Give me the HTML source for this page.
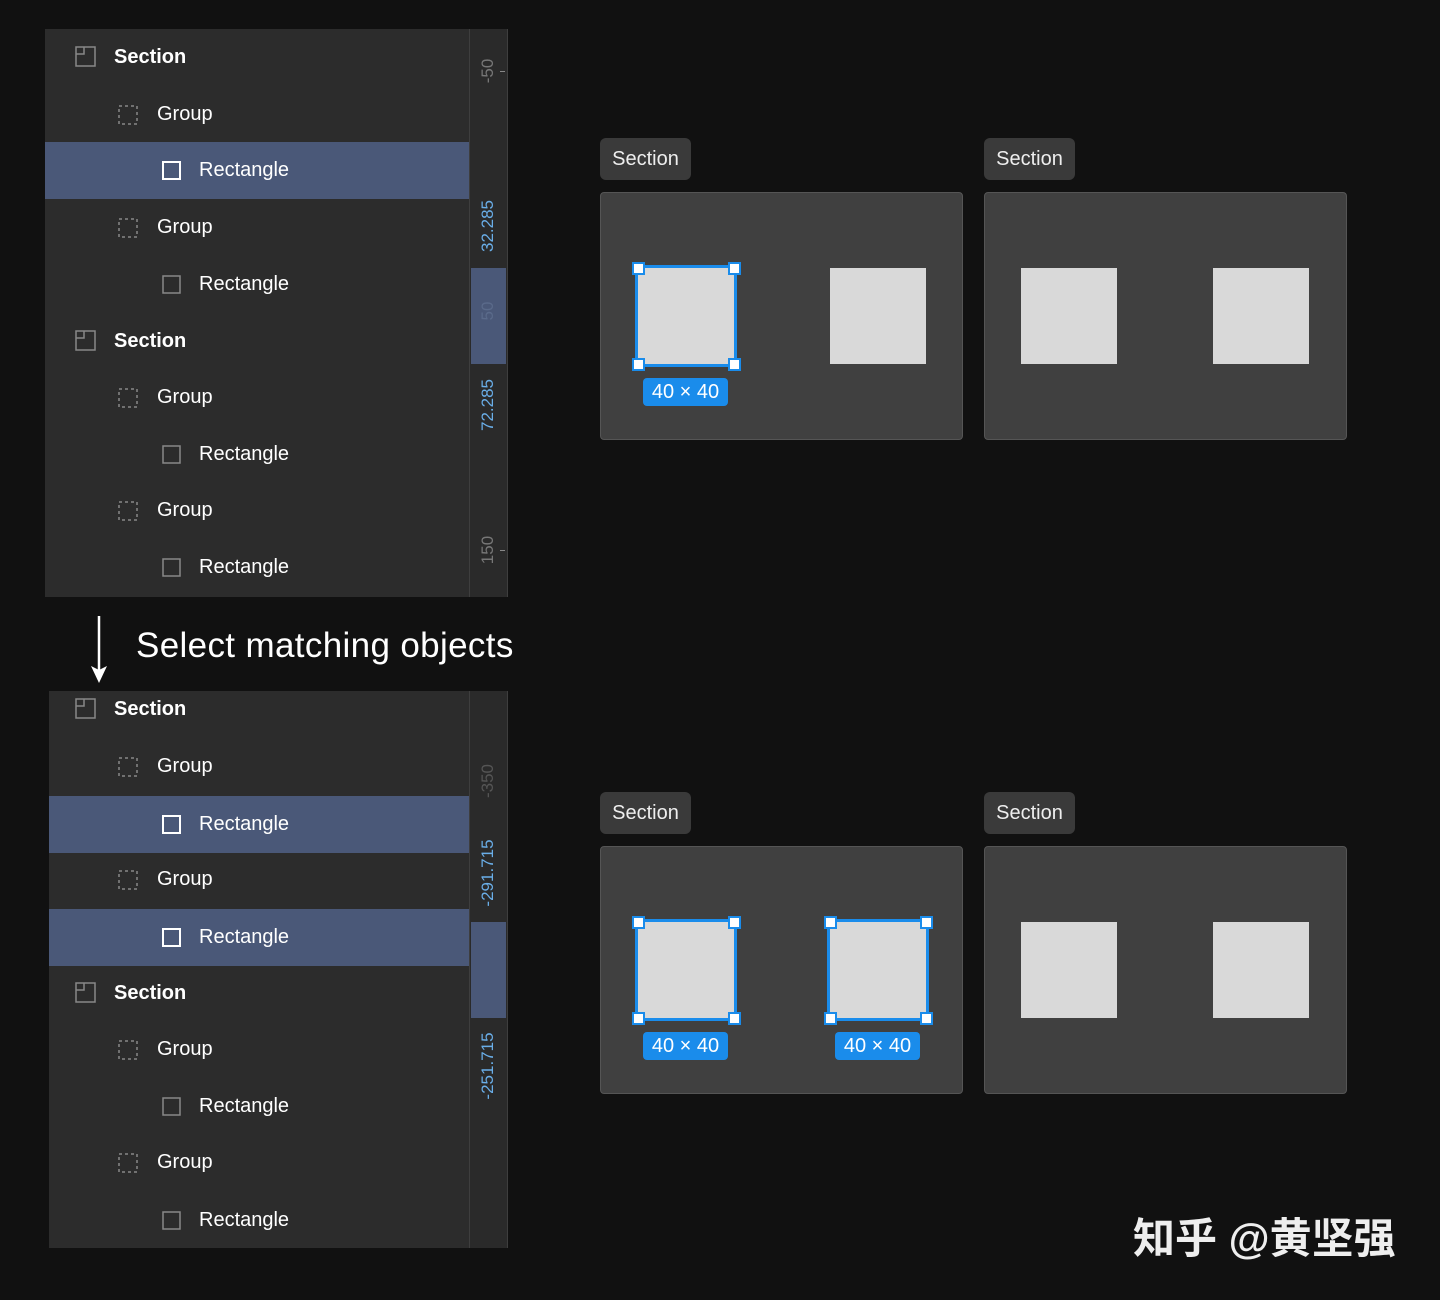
<!DOCTYPE html><html><head><meta charset="utf-8"><style>
body{margin:0;width:1440px;height:1300px;background:#111;position:relative;overflow:hidden;font-family:"Liberation Sans","Noto Sans CJK SC",sans-serif;color:#fff}
.a{position:absolute}
.panel{position:absolute;background:#2c2c2c;overflow:hidden}
.row{position:absolute;left:0;width:424px;height:57px;font-size:20px;line-height:57px}
.sel{background:#4a5878}
.ruler{position:absolute;top:0;bottom:0;left:424px;width:37px;background:#2a2a2a;border-left:1px solid #3e3e3e;border-right:1px solid #3e3e3e}
.rl{position:absolute;transform:rotate(-90deg);font-size:17px;white-space:nowrap;width:100px;text-align:center;left:-32px}
.lab{position:absolute;width:91px;height:42px;background:#3a3a3a;border-radius:6px;font-size:20px;line-height:42px;text-align:center;color:#eee}
.fr{position:absolute;width:361px;height:246px;background:#404040;border:1px solid #555;border-radius:4px}
.sq{position:absolute;width:96px;height:96px;background:#d9d9d9}
.s2{outline:3px solid #1a8ceb}
.h{position:absolute;width:13px;height:13px;background:#fff;border:2px solid #1a8ceb;box-sizing:border-box}
.bd{position:absolute;width:85px;height:28px;background:#1a8ceb;border-radius:4px;font-size:20px;line-height:28px;text-align:center}
</style></head><body>

<div class="panel" style="left:45px;top:29px;width:463px;height:568px">
<div class="row" style="top:0"><svg class="a" style="left:30px;top:17px" width="22" height="22"><rect x="1" y="1" width="19" height="19" fill="none" stroke="#888" stroke-width="1.5"/><path d="M1 8H9V1" fill="none" stroke="#888" stroke-width="1.5"/></svg><b class="a" style="left:69px">Section</b></div>
<div class="row" style="top:57px"><svg class="a" style="left:73px;top:19px" width="20" height="20"><rect x="1" y="1" width="18" height="18" fill="none" stroke="#888" stroke-width="1.5" stroke-dasharray="3 3"/></svg><span class="a" style="left:112px">Group</span></div>
<div class="row sel" style="top:113px"><svg class="a" style="left:117px;top:19px" width="19" height="19"><rect x="1" y="1" width="17" height="17" fill="none" stroke="#fff" stroke-width="2"/></svg><span class="a" style="left:154px">Rectangle</span></div>
<div class="row" style="top:170px"><svg class="a" style="left:73px;top:19px" width="20" height="20"><rect x="1" y="1" width="18" height="18" fill="none" stroke="#888" stroke-width="1.5" stroke-dasharray="3 3"/></svg><span class="a" style="left:112px">Group</span></div>
<div class="row" style="top:227px"><svg class="a" style="left:117px;top:19px" width="19" height="19"><rect x="1" y="1" width="17" height="17" fill="none" stroke="#888" stroke-width="1.5"/></svg><span class="a" style="left:154px">Rectangle</span></div>
<div class="row" style="top:284px"><svg class="a" style="left:30px;top:17px" width="22" height="22"><rect x="1" y="1" width="19" height="19" fill="none" stroke="#888" stroke-width="1.5"/><path d="M1 8H9V1" fill="none" stroke="#888" stroke-width="1.5"/></svg><b class="a" style="left:69px">Section</b></div>
<div class="row" style="top:340px"><svg class="a" style="left:73px;top:19px" width="20" height="20"><rect x="1" y="1" width="18" height="18" fill="none" stroke="#888" stroke-width="1.5" stroke-dasharray="3 3"/></svg><span class="a" style="left:112px">Group</span></div>
<div class="row" style="top:397px"><svg class="a" style="left:117px;top:19px" width="19" height="19"><rect x="1" y="1" width="17" height="17" fill="none" stroke="#888" stroke-width="1.5"/></svg><span class="a" style="left:154px">Rectangle</span></div>
<div class="row" style="top:453px"><svg class="a" style="left:73px;top:19px" width="20" height="20"><rect x="1" y="1" width="18" height="18" fill="none" stroke="#888" stroke-width="1.5" stroke-dasharray="3 3"/></svg><span class="a" style="left:112px">Group</span></div>
<div class="row" style="top:510px"><svg class="a" style="left:117px;top:19px" width="19" height="19"><rect x="1" y="1" width="17" height="17" fill="none" stroke="#888" stroke-width="1.5"/></svg><span class="a" style="left:154px">Rectangle</span></div>
<div class="ruler"><div class="a" style="left:1px;width:35px;top:239px;height:96px;background:#4a5878"></div>
<div class="a" style="left:30px;top:42px;width:5px;height:1px;background:#888"></div>
<div class="a" style="left:30px;top:521px;width:5px;height:1px;background:#888"></div>
<div class="rl" style="top:32px;color:#777">-50</div>
<div class="rl" style="top:187px;color:#6aaee8">32.285</div>
<div class="rl" style="top:272px;color:#5a6a8a">50</div>
<div class="rl" style="top:366px;color:#6aaee8">72.285</div>
<div class="rl" style="top:511px;color:#777">150</div></div>
</div>

<svg class="a" style="left:88px;top:614px" width="22" height="70"><path d="M11 2V58" stroke="#fff" stroke-width="2.5"/><path d="M3 52L11 69L19 52L11 56Z" fill="#fff"/></svg>
<div class="a" style="left:136px;top:624px;font-size:35px;line-height:44px;letter-spacing:0.35px">Select matching objects</div>

<div class="panel" style="left:49px;top:691px;width:459px;height:557px">
<div class="row" style="top:-10px"><svg class="a" style="left:26px;top:17px" width="22" height="22"><rect x="1" y="1" width="19" height="19" fill="none" stroke="#888" stroke-width="1.5"/><path d="M1 8H9V1" fill="none" stroke="#888" stroke-width="1.5"/></svg><b class="a" style="left:65px">Section</b></div>
<div class="row" style="top:47px"><svg class="a" style="left:69px;top:19px" width="20" height="20"><rect x="1" y="1" width="18" height="18" fill="none" stroke="#888" stroke-width="1.5" stroke-dasharray="3 3"/></svg><span class="a" style="left:108px">Group</span></div>
<div class="row sel" style="top:105px;width:420px"><svg class="a" style="left:113px;top:19px" width="19" height="19"><rect x="1" y="1" width="17" height="17" fill="none" stroke="#fff" stroke-width="2"/></svg><span class="a" style="left:150px">Rectangle</span></div>
<div class="row" style="top:160px"><svg class="a" style="left:69px;top:19px" width="20" height="20"><rect x="1" y="1" width="18" height="18" fill="none" stroke="#888" stroke-width="1.5" stroke-dasharray="3 3"/></svg><span class="a" style="left:108px">Group</span></div>
<div class="row sel" style="top:218px;width:420px"><svg class="a" style="left:113px;top:19px" width="19" height="19"><rect x="1" y="1" width="17" height="17" fill="none" stroke="#fff" stroke-width="2"/></svg><span class="a" style="left:150px">Rectangle</span></div>
<div class="row" style="top:274px"><svg class="a" style="left:26px;top:17px" width="22" height="22"><rect x="1" y="1" width="19" height="19" fill="none" stroke="#888" stroke-width="1.5"/><path d="M1 8H9V1" fill="none" stroke="#888" stroke-width="1.5"/></svg><b class="a" style="left:65px">Section</b></div>
<div class="row" style="top:330px"><svg class="a" style="left:69px;top:19px" width="20" height="20"><rect x="1" y="1" width="18" height="18" fill="none" stroke="#888" stroke-width="1.5" stroke-dasharray="3 3"/></svg><span class="a" style="left:108px">Group</span></div>
<div class="row" style="top:387px"><svg class="a" style="left:113px;top:19px" width="19" height="19"><rect x="1" y="1" width="17" height="17" fill="none" stroke="#888" stroke-width="1.5"/></svg><span class="a" style="left:150px">Rectangle</span></div>
<div class="row" style="top:443px"><svg class="a" style="left:69px;top:19px" width="20" height="20"><rect x="1" y="1" width="18" height="18" fill="none" stroke="#888" stroke-width="1.5" stroke-dasharray="3 3"/></svg><span class="a" style="left:108px">Group</span></div>
<div class="row" style="top:501px"><svg class="a" style="left:113px;top:19px" width="19" height="19"><rect x="1" y="1" width="17" height="17" fill="none" stroke="#888" stroke-width="1.5"/></svg><span class="a" style="left:150px">Rectangle</span></div>
<div class="ruler" style="left:420px"><div class="a" style="left:1px;width:35px;top:231px;height:96px;background:#4a5878"></div>
<div class="rl" style="top:80px;color:#555">-350</div>
<div class="rl" style="top:172px;color:#6aaee8">-291.715</div>
<div class="rl" style="top:365px;color:#6aaee8">-251.715</div></div>
</div>

<!-- top canvas -->
<div class="lab" style="left:600px;top:138px">Section</div>
<div class="lab" style="left:984px;top:138px">Section</div>
<div class="fr" style="left:600px;top:192px"></div>
<div class="fr" style="left:984px;top:192px"></div>
<div class="sq s2" style="left:638px;top:268px"></div>
<div class="h" style="left:632px;top:262px"></div><div class="h" style="left:728px;top:262px"></div><div class="h" style="left:632px;top:358px"></div><div class="h" style="left:728px;top:358px"></div>
<div class="bd" style="left:643px;top:378px">40 × 40</div>
<div class="sq" style="left:830px;top:268px"></div>
<div class="sq" style="left:1021px;top:268px"></div>
<div class="sq" style="left:1213px;top:268px"></div>

<!-- bottom canvas -->
<div class="lab" style="left:600px;top:792px">Section</div>
<div class="lab" style="left:984px;top:792px">Section</div>
<div class="fr" style="left:600px;top:846px"></div>
<div class="fr" style="left:984px;top:846px"></div>
<div class="sq s2" style="left:638px;top:922px"></div>
<div class="h" style="left:632px;top:916px"></div><div class="h" style="left:728px;top:916px"></div><div class="h" style="left:632px;top:1012px"></div><div class="h" style="left:728px;top:1012px"></div>
<div class="bd" style="left:643px;top:1032px">40 × 40</div>
<div class="sq s2" style="left:830px;top:922px"></div>
<div class="h" style="left:824px;top:916px"></div><div class="h" style="left:920px;top:916px"></div><div class="h" style="left:824px;top:1012px"></div><div class="h" style="left:920px;top:1012px"></div>
<div class="bd" style="left:835px;top:1032px">40 × 40</div>
<div class="sq" style="left:1021px;top:922px"></div>
<div class="sq" style="left:1213px;top:922px"></div>

<div class="a" style="left:1133px;top:1212px;font-size:42px;line-height:54px;color:#eee;font-family:'Liberation Sans','Noto Sans CJK SC',sans-serif;font-weight:bold">知乎 @黄坚强</div>
</body></html>
